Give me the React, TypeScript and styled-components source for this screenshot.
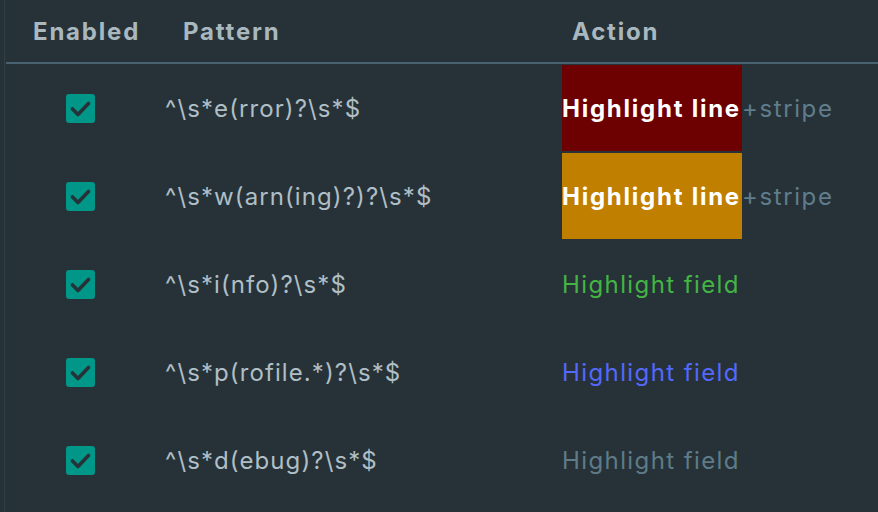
import React from "react";
import styled, { createGlobalStyle } from "styled-components";

type Action =
  | { kind: "line"; bg: string }
  | { kind: "field"; color: string };

interface Rule {
  pattern: string;
  action: Action;
}

const rules: Rule[] = [
  { pattern: "^\\s*e(rror)?\\s*$", action: { kind: "line", bg: "#6d0000" } },
  { pattern: "^\\s*w(arn(ing)?)?\\s*$", action: { kind: "line", bg: "#c17f00" } },
  { pattern: "^\\s*i(nfo)?\\s*$", action: { kind: "field", color: "#43b543" } },
  { pattern: "^\\s*p(rofile.*)?\\s*$", action: { kind: "field", color: "#5468fc" } },
  { pattern: "^\\s*d(ebug)?\\s*$", action: { kind: "field", color: "#5f7b88" } },
];

const GlobalStyle = createGlobalStyle`
  html, body {
    margin: 0;
    padding: 0;
    background: #263238;
    font-family: Inter, "Open Sans", sans-serif;
  }
`;

const Frame = styled.div`
  height: 512px;
  padding-left: 4px;
  background: #263238;
  overflow: hidden;
`;

const Table = styled.div`
  height: 100%;
  border-left: 1px solid #2f3f47;
  padding-left: 1px;
`;

const Header = styled.div`
  display: grid;
  grid-template-columns: 150px 406px 1fr;
  height: 62px;
  align-items: center;
  border-bottom: 2px solid #4a6371;
`;

const HeadCell = styled.div<{ $pad: number }>`
  padding-left: ${(p) => p.$pad}px;
  color: #a9b8bf;
  font-size: 24px;
  font-weight: 700;
  letter-spacing: 1.8px;
`;

const Row = styled.div`
  display: grid;
  grid-template-columns: 150px 406px 1fr;
  height: 88px;
  align-items: center;
`;

const CheckCell = styled.div`
  display: flex;
  justify-content: center;
  padding-right: 2px;
`;

const Box = styled.div`
  width: 29px;
  height: 29px;
  border-radius: 3px;
  background: #009688;
`;

const Pattern = styled.div`
  padding-left: 9px;
  color: #b0bec5;
  font-size: 24px;
  letter-spacing: 1.1px;
  white-space: nowrap;
`;

const ActionCell = styled.div`
  height: 100%;
  display: flex;
  align-items: center;
  padding: 1px 0;
  box-sizing: border-box;
`;

const LineBlock = styled.div<{ $bg: string }>`
  height: 100%;
  width: 180px;
  background: ${(p) => p.$bg};
  display: flex;
  align-items: center;
  color: #ffffff;
  font-size: 24px;
  font-weight: 700;
  letter-spacing: 1.75px;
  white-space: nowrap;
`;

const Stripe = styled.span`
  color: #607d8b;
  font-size: 24px;
  letter-spacing: 1.6px;
`;

const Field = styled.span<{ $color: string }>`
  color: ${(p) => p.$color};
  font-size: 24px;
  letter-spacing: 1.4px;
`;

const Check = () => (
  <svg width="29" height="29" viewBox="0 0 29 29">
    <path
      d="M6.5 15 L12 20.5 L22.5 9.5"
      fill="none"
      stroke="#263238"
      strokeWidth="3.6"
      strokeLinecap="round"
      strokeLinejoin="round"
    />
  </svg>
);

const App = () => (
  <Frame>
    <GlobalStyle />
    <Table>
      <Header>
        <HeadCell $pad={27}>Enabled</HeadCell>
        <HeadCell $pad={27}>Pattern</HeadCell>
        <HeadCell $pad={10}>Action</HeadCell>
      </Header>
      {rules.map((r) => (
        <Row key={r.pattern}>
          <CheckCell>
            <Box>
              <Check />
            </Box>
          </CheckCell>
          <Pattern>{r.pattern}</Pattern>
          <ActionCell>
            {r.action.kind === "line" ? (
              <>
                <LineBlock $bg={r.action.bg}>Highlight line</LineBlock>
                <Stripe>+stripe</Stripe>
              </>
            ) : (
              <Field $color={r.action.color}>Highlight field</Field>
            )}
          </ActionCell>
        </Row>
      ))}
    </Table>
  </Frame>
);

export default App;
